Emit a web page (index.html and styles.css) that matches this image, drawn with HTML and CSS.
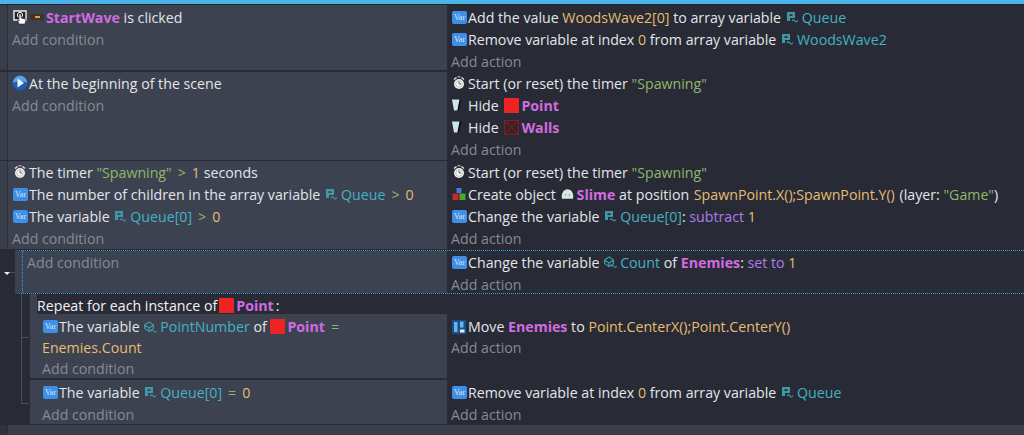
FILE: index.html
```html
<!DOCTYPE html>
<html lang="en">
<head>
    <meta charset="UTF-8">
    <meta name="viewport" content="width=device-width, initial-scale=1.0">
    <title>Events sheet</title>
    <link rel="stylesheet" href="styles.css">
</head>
<body>

    <svg class="defs" width="0" height="0">
        <defs>
            <symbol id="scene-var" viewBox="0 0 14 14">
                <path d="M1 2h8v6H4v3H1zM3.500 4.200h3v1.800h-3z" fill="#3f98a6" fill-rule="evenodd"/>
                <path d="M6 11c1-1.500 2-1.500 3 0s2 1 3-.5" fill="none" stroke="#3f98a6" stroke-width="1.200"/>
            </symbol>
            <symbol id="object-var" viewBox="0 0 14 14">
                <path d="M.5 5 5 2l4.500 3v3.500L5 11.500.5 8.500zM.5 5 5 8l4.500-3M5 8v3.500" fill="none" stroke="#3f98a6" stroke-width="1.100"/>
                <path d="M7 11.500c1-1.300 2-1.300 3 0s2 .8 2.500-.5" fill="none" stroke="#3f98a6" stroke-width="1.100"/>
            </symbol>
            <symbol id="timer" viewBox="0 0 14 14">
                <circle cx="7" cy="8" r="5" fill="#eee"/>
                <circle cx="7" cy="8" r="3.200" fill="#fff" stroke="#999" stroke-width=".6"/>
                <path d="M7 5.500V8h2" fill="none" stroke="#444" stroke-width=".9"/>
                <path d="M2 3.500 4.500 1.500M12 3.500 9.500 1.500" stroke="#ddd" stroke-width="1.600"/>
                <path d="M5.500 .8h3" stroke="#bbb" stroke-width="1.200"/>
            </symbol>
            <symbol id="hide" viewBox="0 0 14 14">
                <path d="M1.500 1.500h8L7 12.500H3z" fill="#111"/>
                <path d="M0 1.500h7.500L5.300 12.500H2z" fill="#cfe3f5"/>
            </symbol>
            <symbol id="create" viewBox="0 0 14 14">
                <path d="M4.500 1h5v5h-5z" fill="#3d7fd0"/>
                <path d="M.5 6.500h6v6.500h-6z" fill="#c9282a"/>
                <path d="M7.500 6.500h6v6.500h-6z" fill="#4fa52e"/>
            </symbol>
            <symbol id="move" viewBox="0 0 14 14">
                <path d="M0 0h14v14H0z" fill="#1c4f86"/>
                <path d="M2 2h3.500v10H2z" fill="#63b6ee"/>
                <path d="M8 1.500h3.500v6H8z" fill="#63b6ee"/>
                <path d="M8 9.500h4.500v3H8z" fill="#dbeeff"/>
            </symbol>
        </defs>
    </svg>

    <div class="topbar"></div>

    <div class="sheet">
        <div class="event first-event">
            <div class="conditions">
                <div class="row">
                    <svg class="icon click-icon" viewBox="0 0 14 15" width="14" height="15">
                        <path d="M1 1h12v9H1z" fill="#222" stroke="#eee" stroke-width="1.400"/>
                        <circle cx="7" cy="5" r="2.600" fill="none" stroke="#fff" stroke-width="1"/>
                        <path d="M6 4v7l-1.500-1L6 14h6l1-5-5-1V4z" fill="#fff" stroke="#222" stroke-width=".6"/>
                    </svg>
                    <span class="button-thumb"><span class="button-mark"></span></span>
                    <b class="obj">StartWave</b>&nbsp;is clicked
                </div>
                <div class="row add">Add condition</div>
            </div>
            <div class="actions">
                <div class="row"><span class="var">Var</span>Add the value&nbsp;<span class="val">WoodsWave2[0]</span>&nbsp;to array variable&nbsp;<svg class="param"><use href="#scene-var"/></svg><span class="teal">Queue</span></div>
                <div class="row"><span class="var">Var</span>Remove variable at index&nbsp;<span class="val">0</span>&nbsp;from array variable&nbsp;<svg class="param"><use href="#scene-var"/></svg><span class="teal">WoodsWave2</span></div>
                <div class="row add">Add action</div>
            </div>
        </div>

        <div class="event">
            <div class="conditions">
                <div class="row">
                    <svg class="globe-icon" viewBox="0 0 16 16" width="16" height="16">
                        <circle cx="8" cy="8" r="7.500" fill="#1d5fb4"/>
                        <path d="M.8 8a7.200 7.200 0 0 1 14.400 0c-3-2.500-11-2.500-14.400 0z" fill="#5aa5e8"/>
                        <path d="M5.500 3.500 12 8l-6.500 4.500z" fill="#f2f7fc"/>
                    </svg>At the beginning of the scene
                </div>
                <div class="row add">Add condition</div>
            </div>
            <div class="actions">
                <div class="row"><svg class="icon"><use href="#timer"/></svg>Start (or reset) the timer&nbsp;<span class="str">"Spawning"</span></div>
                <div class="row"><svg class="icon"><use href="#hide"/></svg>Hide&nbsp;<span class="point spaced"></span><b class="obj">Point</b></div>
                <div class="row"><svg class="icon"><use href="#hide"/></svg>Hide&nbsp;<svg class="walls spaced" viewBox="0 0 15 15" width="15" height="15"><path d="M.5.500h14v14H.500zM.5.500l14 14M14.500.500l-14 14" fill="#3a2229" stroke="#8a1c20"/></svg><b class="obj">Walls</b></div>
                <div class="row add">Add action</div>
            </div>
        </div>

        <div class="event">
            <div class="conditions">
                <div class="row"><svg class="icon"><use href="#timer"/></svg>The timer&nbsp;<span class="str">"Spawning"</span><span class="op">&gt;</span><span class="val">1</span>&nbsp;seconds</div>
                <div class="row"><span class="var">Var</span>The number of children in the array variable&nbsp;<svg class="param"><use href="#scene-var"/></svg><span class="teal">Queue</span><span class="op">&gt;</span><span class="val">0</span></div>
                <div class="row"><span class="var">Var</span>The variable&nbsp;<svg class="param"><use href="#scene-var"/></svg><span class="teal">Queue[0]</span><span class="op">&gt;</span><span class="val">0</span></div>
                <div class="row add">Add condition</div>
            </div>
            <div class="actions">
                <div class="row"><svg class="icon"><use href="#timer"/></svg>Start (or reset) the timer&nbsp;<span class="str">"Spawning"</span></div>
                <div class="row"><svg class="icon"><use href="#create"/></svg>Create object&nbsp;<svg class="slime" viewBox="0 0 14 12" width="13" height="12"><path d="M1 11c-1-6 2-10 6-10s7 4 6 10z" fill="#d8e8dc"/><circle cx="5" cy="7" r=".8" fill="#7a8a80"/><circle cx="9" cy="7" r=".8" fill="#7a8a80"/></svg><b class="obj">Slime</b>&nbsp;at position&nbsp;<span class="val coords">SpawnPoint.X();SpawnPoint.Y()</span>&nbsp;(layer:&nbsp;<span class="str">"Game"</span>)</div>
                <div class="row"><span class="var">Var</span>Change the variable&nbsp;<svg class="param"><use href="#scene-var"/></svg><span class="teal">Queue[0]</span>:&nbsp;<span class="lilac">subtract</span>&nbsp;<span class="val">1</span></div>
                <div class="row add">Add action</div>
            </div>
        </div>

        <div class="subtree">
            <span class="fold"></span>
            <div class="event level-1 selected">
                <div class="conditions">
                    <div class="row add">Add condition</div>
                </div>
                <div class="actions">
                    <div class="row"><span class="var">Var</span>Change the variable&nbsp;<svg class="param"><use href="#object-var"/></svg><span class="teal">Count</span>&nbsp;of&nbsp;<b class="obj">Enemies</b>:&nbsp;<span class="lilac">set to</span>&nbsp;<span class="val">1</span></div>
                    <div class="row add">Add action</div>
                </div>
            </div>

            <div class="branch">
                <span class="tick tick-one"></span>
                <span class="tick tick-two"></span>
                <div class="foreach">Repeat for each instance of<span class="point spaced"></span><b class="obj">Point</b><span class="colon">:</span></div>
                <div class="event level-2 first-child">
                    <div class="conditions">
                        <div class="row"><span class="var">Var</span>The variable&nbsp;<svg class="param"><use href="#object-var"/></svg><span class="teal">PointNumber</span>&nbsp;of&nbsp;<span class="point"></span><b class="obj">Point</b><span class="op">=</span></div>
                        <div class="row"><span class="val">Enemies.Count</span></div>
                        <div class="row add">Add condition</div>
                    </div>
                    <div class="actions">
                        <div class="row"><svg class="icon"><use href="#move"/></svg>Move&nbsp;<b class="obj">Enemies</b>&nbsp;to&nbsp;<span class="val">Point.CenterX();Point.CenterY()</span></div>
                        <div class="row add">Add action</div>
                    </div>
                </div>
                <div class="event level-2 last-child">
                    <div class="conditions">
                        <div class="row"><span class="var">Var</span>The variable&nbsp;<svg class="param"><use href="#scene-var"/></svg><span class="teal">Queue[0]</span><span class="op">=</span><span class="val">0</span></div>
                        <div class="row add">Add condition</div>
                    </div>
                    <div class="actions">
                        <div class="row"><span class="var">Var</span>Remove variable at index&nbsp;<span class="val">0</span>&nbsp;from array variable&nbsp;<svg class="param"><use href="#scene-var"/></svg><span class="teal">Queue</span></div>
                        <div class="row add">Add action</div>
                    </div>
                </div>
            </div>
        </div>
    </div>

    <div class="footer"></div>

</body>
</html>
```
FILE: styles.css
```css
html, body {
    margin: 0;
    padding: 0;
    height: 100%;
    overflow: hidden;
}

body {
    background-color: #282b35;
    color: #e3e5ea;
    font-family: "Open Sans", "Noto Sans", sans-serif;
    font-size: 14.2px;
}

.defs {
    display: block;
    height: 0;
}

.topbar {
    height: 4px;
    background-color: #4ab3e8;
    border-bottom: 1px solid #22252d;
}

.sheet {
    display: flex;
    flex-direction: column;
}

.event {
    display: grid;
    grid-template-columns: 440px 1fr;
    grid-template-rows: minmax(0, 1fr);
    height: 88px;
    margin-bottom: 1px;
    border-left: 7px solid #3a3e4b;
}

.first-event {
    height: 65px;
    margin-bottom: 2px;
}

.first-event .row:first-child {
    margin-top: 1px;
}

.conditions {
    box-sizing: border-box;
    background-color: #3d4250;
    border-left: 1px solid #2a2d36;
}

.actions {
    padding-left: 4px;
}

.row {
    display: flex;
    align-items: center;
    height: 22px;
    padding-left: 4px;
    white-space: nowrap;
}

.actions .row {
    padding-left: 0;
}

.add {
    color: #878a93;
}

.icon {
    flex: none;
    width: 14px;
    height: 14px;
    margin: 0 2px 0 1px;
}

.param {
    flex: none;
    width: 14px;
    height: 14px;
    margin: 0 2px 0 1px;
}

.click-icon {
    height: 15px;
    margin-right: 3px;
}

.globe-icon {
    flex: none;
    width: 16px;
    height: 16px;
    margin-right: 1px;
}

.button-thumb {
    display: flex;
    align-items: center;
    justify-content: center;
    width: 14px;
    height: 6px;
    margin-right: 2px;
    background-color: #4a2f1c;
    border-radius: 2px;
}

.button-mark {
    width: 5px;
    height: 2px;
    background-color: #c9a27a;
}

.var {
    flex: none;
    width: 15px;
    height: 13px;
    margin: 0 1px;
    background-color: #3f8fe8;
    border-radius: 2px;
    color: #d8e8fa;
    font-family: "Liberation Serif", serif;
    font-size: 8px;
    line-height: 13px;
    text-align: center;
}

.obj {
    color: #d16be2;
    font-weight: 700;
}

.val {
    color: #e6bd72;
}

.coords {
    margin: 0 1px;
}

.str,
.op {
    color: #8db86b;
}

.op {
    margin: 0 6px;
}

.teal {
    color: #43b2c2;
}

.lilac {
    color: #ab7ee8;
}

.colon {
    margin-left: 2px;
}

.point {
    flex: none;
    width: 15px;
    height: 15px;
    margin-right: 2px;
    background-color: #ee2424;
}

.spaced {
    margin-left: 2px;
}

.walls {
    flex: none;
    margin-right: 2px;
}

.slime {
    flex: none;
    margin: 0 3px 0 1px;
}

/* sub events */
.subtree {
    position: relative;
}

.fold {
    position: absolute;
    top: 22px;
    left: 4px;
    width: 0;
    height: 0;
    border-top: 3px solid #f0f0f0;
    border-left: 3px solid transparent;
    border-right: 3px solid transparent;
}

.fold::after {
    content: "";
    position: absolute;
    top: -3px;
    left: 3px;
    width: 5px;
    height: 1px;
    background-color: #4a4e5a;
}

.level-1 {
    box-sizing: border-box;
    grid-template-columns: 425px 1fr;
    height: 44px;
    margin-left: 15px;
    margin-bottom: 0;
    border-left: 7px solid #3d4250;
}

.selected {
    border-top: 1px dotted #2f9fd8;
    border-bottom: 1px dotted #2f9fd8;
}

.selected .conditions {
    border-left: 1px dotted #2f9fd8;
}

.branch {
    position: relative;
    margin-left: 21px;
    padding-left: 9px;
}

.branch::before {
    content: "";
    position: absolute;
    top: 0;
    left: 0;
    height: 109px;
    width: 1px;
    background-color: #4a4e5a;
}

.tick {
    position: absolute;
    left: 0;
    width: 8px;
    height: 1px;
    background-color: #4a4e5a;
}

.tick-one {
    top: 43px;
}

.tick-two {
    top: 109px;
}

.foreach {
    display: flex;
    align-items: center;
    height: 18px;
    padding-top: 2px;
    border-left: 7px solid #3d4250;
    color: #f2f2f2;
}

.level-2 {
    grid-template-columns: 410px 1fr;
    border-left: 7px solid #3d4250;
}

.level-2 .conditions {
    border-left: 0;
}

.level-2 .row {
    padding-left: 5px;
}

.level-2 .actions .row {
    padding-left: 0;
}

.first-child {
    height: 64px;
    margin-bottom: 2px;
}

.first-child .row {
    height: 21px;
}

.first-child .row:first-child {
    margin-top: 2px;
}

.last-child {
    height: 44px;
    margin-bottom: 1px;
}

.last-child .row:first-child {
    margin-top: 1px;
}

.footer {
    height: 12px;
    background-color: #3a3e4b;
    border-left: 7px solid #30343f;
    box-shadow: inset 1px 0 0 #2a2d36;
}
```
